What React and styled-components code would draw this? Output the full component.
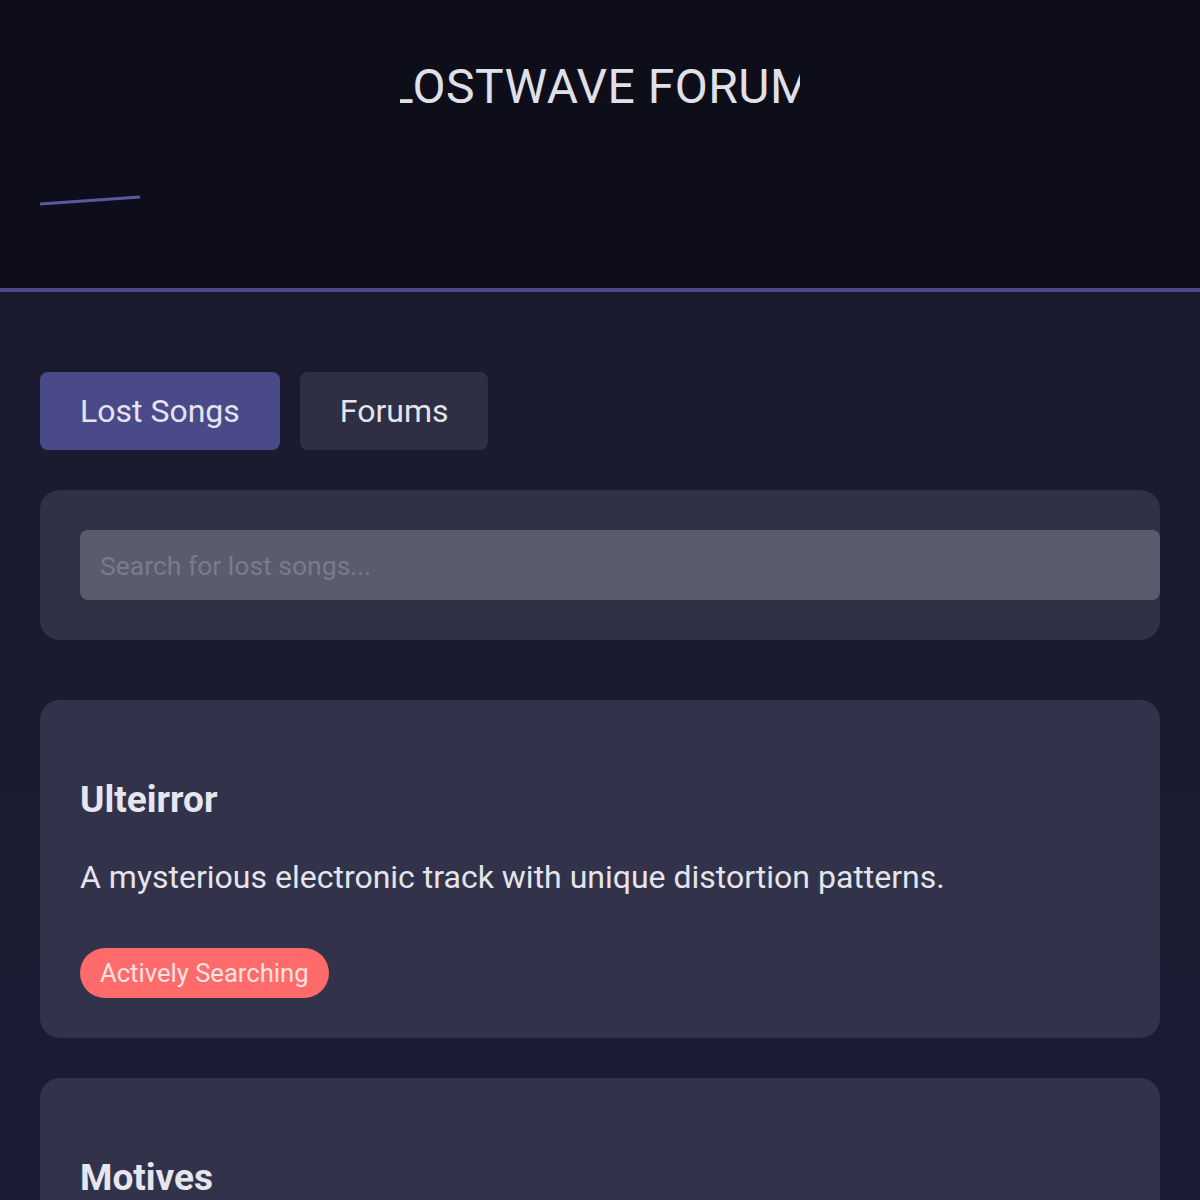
import React from 'react'
import styled, { createGlobalStyle } from 'styled-components'

const GlobalStyle = createGlobalStyle`
    html, body {
        margin: 0;
        padding: 0;
        background: #1a1a2e;
        font-family: Roboto, "Liberation Sans", sans-serif;
        color: #e4e4ec;
    }
`

const Header = styled('header')`
    background: #0d0e1a;
    height: 292px;
    box-sizing: border-box;
    padding: 56px 40px 0;
    border-bottom: 4px solid #4a4a8a;
`

const TitleClip = styled('div')`
    width: 400px;
    margin: 0 auto;
    display: flex;
    justify-content: center;
    overflow: hidden;
`

const Title = styled('h1')`
    margin: 0;
    font-size: 48px;
    font-weight: 400;
    line-height: 62px;
    letter-spacing: 0.5px;
    white-space: nowrap;
    color: #e0e0e8;
`

const Slash = styled('div')`
    width: 100px;
    height: 3px;
    margin-top: 81px;
    background: #5a5aa4;
    transform: rotate(-4deg);
`

const Main = styled('main')`
    min-height: 908px;
    padding: 80px 40px 40px;
    background: linear-gradient(180deg, #1b1b2f 0%, #181c34 100%);
`

const Tabs = styled('nav')`
    display: flex;
    gap: 20px;
    margin-bottom: 40px;
`

const Tab = styled('button')`
    height: 78px;
    padding: 0 40px;
    border: none;
    border-radius: 8px;
    font-family: inherit;
    font-size: 32px;
    color: #e4e4ec;
    cursor: pointer;
    background: ${props => (props.active ? '#4a4a8a' : '#2e2e44')};
`

const SearchPanel = styled('section')`
    background: #313146;
    border-radius: 20px;
    padding: 40px;
    margin-bottom: 60px;
`

const SearchInput = styled('input')`
    display: block;
    width: 100%;
    height: 70px;
    padding: 0 20px;
    box-sizing: content-box;
    margin: 0;
    border: none;
    border-radius: 8px;
    background: #5a5b6c;
    font-family: inherit;
    font-size: 26.5px;
    color: #e4e4ec;
    outline: none;

    &::placeholder {
        color: #7a7b8b;
    }
`

const SongList = styled('div')`
    display: flex;
    flex-direction: column;
    gap: 40px;
`

const Card = styled('article')`
    background: #32334a;
    border-radius: 20px;
    padding: 40px;
`

const SongTitle = styled('h3')`
    margin: 40px 0 0;
    font-size: 37px;
    line-height: 40px;
    font-weight: 700;
    color: #e6e6ee;
`

const Description = styled('p')`
    margin: 40px 0 0;
    font-size: 32px;
    line-height: 34px;
    color: #e4e4ec;
`

const Badge = styled('span')`
    display: inline-flex;
    align-items: center;
    height: 50px;
    margin-top: 54px;
    padding: 0 20px;
    border-radius: 25px;
    background: ${props => props.color};
    font-size: 25.6px;
    color: #ffe2e2;
`

const songs = [
    {
        title: 'Ulteirror',
        description: 'A mysterious electronic track with unique distortion patterns.',
        status: 'Actively Searching',
        color: '#ff6b6b',
    },
    {
        title: 'Motives',
        description: 'An early 2000s pop-rock song heard on a late night radio show.',
        status: 'Partially Found',
        color: '#e0a84a',
    },
]

const App = () => {
    return (
        <>
            <GlobalStyle />
            <Header>
                <TitleClip>
                    <Title>LOSTWAVE FORUM</Title>
                </TitleClip>
                <Slash />
            </Header>
            <Main>
                <Tabs>
                    <Tab active>Lost Songs</Tab>
                    <Tab>Forums</Tab>
                </Tabs>
                <SearchPanel>
                    <SearchInput placeholder="Search for lost songs..." />
                </SearchPanel>
                <SongList>
                    {songs.map(song => (
                        <Card key={song.title}>
                            <SongTitle>{song.title}</SongTitle>
                            <Description>{song.description}</Description>
                            <Badge color={song.color}>{song.status}</Badge>
                        </Card>
                    ))}
                </SongList>
            </Main>
        </>
    )
}

export default App
